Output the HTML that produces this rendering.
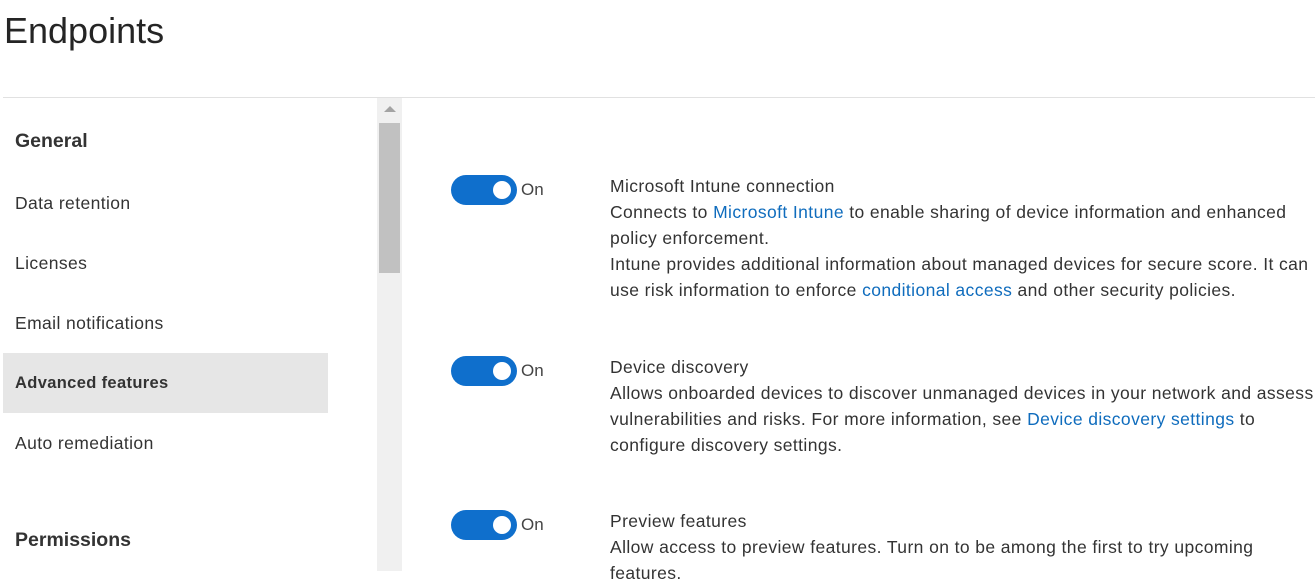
<!DOCTYPE html>
<html><head><meta charset="utf-8"><style>
body{margin:0;width:1315px;height:571px;overflow:hidden;background:#fff;font-family:"Liberation Sans",sans-serif;color:#333;position:relative}
.a{position:absolute;white-space:nowrap}
h1{position:absolute;left:4px;top:10px;margin:0;font-weight:normal;font-size:36px;color:#252525}
.line{position:absolute;left:3px;right:0;top:97px;height:1px;background:#e1e1e1}
.nav{font-size:17.5px;letter-spacing:0.4px;color:#333;left:15px;line-height:20px}
.hd{font-size:19.5px;letter-spacing:0;font-weight:bold;color:#333}
.sel{position:absolute;left:3px;top:353px;width:325px;height:60px;background:#e6e6e6}
.track{position:absolute;left:377px;top:98px;width:25px;height:473px;background:#f0f0f0}
.thumb{position:absolute;left:379px;top:123px;width:21px;height:150px;background:#c1c1c1}
.arrow{position:absolute;left:384px;top:106px;width:0;height:0;border-left:6px solid transparent;border-right:6px solid transparent;border-bottom:6px solid #a3a3a3}
.tg{position:absolute;left:451px;width:66px;height:30px;border-radius:15px;background:#0f6fcc}
.tg::after{content:"";position:absolute;left:42px;top:6px;width:18px;height:18px;border-radius:50%;background:#fff}
.on{font-size:17px;color:#444;left:521px}
.txt{left:610px;font-size:17.5px;letter-spacing:0.4px;line-height:26px;color:#333}
.txt a{color:#0f6cbd;text-decoration:none}
</style></head><body>
<h1>Endpoints</h1>
<div class="line"></div>
<div class="sel"></div>
<div class="a nav hd" style="top:131px">General</div>
<div class="a nav" style="top:193px">Data retention</div>
<div class="a nav" style="top:253px">Licenses</div>
<div class="a nav" style="top:313px">Email notifications</div>
<div class="a nav" style="top:373px;font-weight:bold;font-size:16.5px;letter-spacing:0.35px">Advanced features</div>
<div class="a nav" style="top:433px">Auto remediation</div>
<div class="a nav hd" style="top:530px">Permissions</div>
<div class="track"></div><div class="thumb"></div><div class="arrow"></div>

<div class="tg" style="top:175px"></div><div class="a on" style="top:180px">On</div>
<div class="a txt" style="top:173px">Microsoft Intune connection<br>Connects to <a>Microsoft Intune</a> to enable sharing of device information and enhanced<br>policy enforcement.<br>Intune provides additional information about managed devices for secure score. It can<br>use risk information to enforce <a>conditional access</a> and other security policies.</div>

<div class="tg" style="top:356px"></div><div class="a on" style="top:361px">On</div>
<div class="a txt" style="top:354px">Device discovery<br>Allows onboarded devices to discover unmanaged devices in your network and assess<br>vulnerabilities and risks. For more information, see <a>Device discovery settings</a> to<br>configure discovery settings.</div>

<div class="tg" style="top:510px"></div><div class="a on" style="top:515px">On</div>
<div class="a txt" style="top:508px">Preview features<br>Allow access to preview features. Turn on to be among the first to try upcoming<br>features.</div>
</body></html>
